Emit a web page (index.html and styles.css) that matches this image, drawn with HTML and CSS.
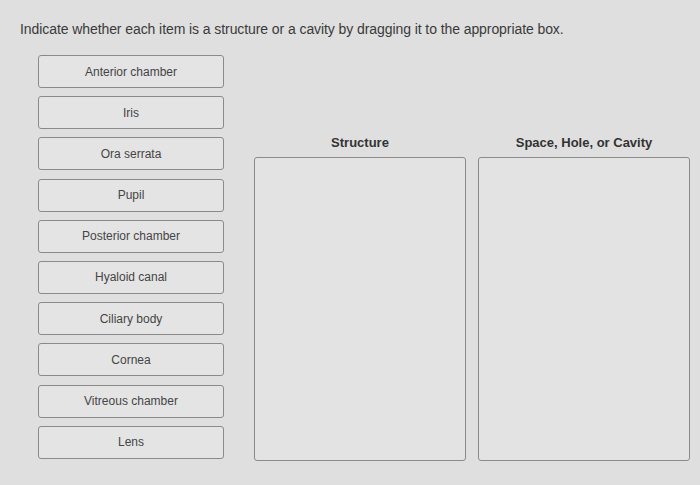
FILE: index.html
```html
<!DOCTYPE html>
<html lang="en">
  <head>
    <meta charset="UTF-8" />
    <meta name="viewport" content="width=device-width, initial-scale=1.0" />
    <title>Structure or cavity</title>
    <link rel="stylesheet" href="styles.css">
  </head>
  <body>
    <p class="prompt">Indicate whether each item is a structure or a cavity by dragging it to the appropriate box.</p>

    <div class="board">
      <ul class="items">
        <li class="item">Anterior chamber</li>
        <li class="item">Iris</li>
        <li class="item">Ora serrata</li>
        <li class="item">Pupil</li>
        <li class="item">Posterior chamber</li>
        <li class="item">Hyaloid canal</li>
        <li class="item">Ciliary body</li>
        <li class="item">Cornea</li>
        <li class="item">Vitreous chamber</li>
        <li class="item">Lens</li>
      </ul>

      <div class="bin">
        <h3>Structure</h3>
        <div class="drop"></div>
      </div>

      <div class="bin">
        <h3>Space, Hole, or Cavity</h3>
        <div class="drop"></div>
      </div>
    </div>
  </body>
</html>
```

FILE: styles.css
```css
body {
  font-family: "Liberation Sans", Arial, sans-serif;
  margin: 0;
  padding: 0 20px;
  background-color: #dfdfdf;
  color: #3a3a3a;
  height: 485px;
  box-sizing: border-box;
}
.prompt {
  margin: 0;
  padding-top: 21px;
  font-size: 14px;
  line-height: 16px;
  letter-spacing: -0.08px;
}
.board {
  display: flex;
  margin-top: 18px;
  padding-left: 18px;
}
.items {
  list-style: none;
  margin: 0;
  padding: 0;
  width: 186px;
  flex-shrink: 0;
  display: flex;
  flex-direction: column;
  gap: 8.2px;
}
.item {
  height: 33px;
  box-sizing: border-box;
  border: 1px solid #8a8a8a;
  border-radius: 3px;
  background-color: #e4e4e4;
  font-size: 12px;
  display: flex;
  align-items: center;
  justify-content: center;
  color: #444;
}
.bin {
  width: 212px;
  flex-shrink: 0;
  margin-left: 12px;
  padding-top: 80px;
}
.bin:first-of-type {
  margin-left: 30px;
}
.bin h3 {
  margin: 0 0 6px;
  font-size: 13px;
  line-height: 16px;
  text-align: center;
  color: #333;
}
.drop {
  height: 302px;
  border: 1px solid #8a8a8a;
  border-radius: 3px;
  background-color: #e3e3e3;
}
```
